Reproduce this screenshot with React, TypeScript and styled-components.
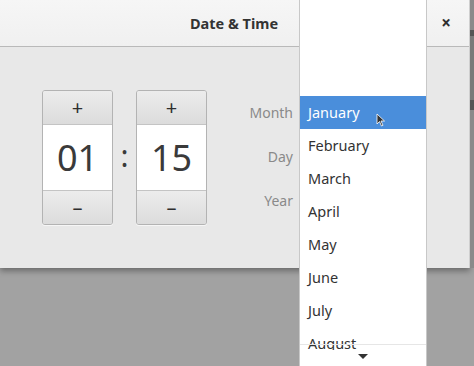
import React from 'react';
import styled, { createGlobalStyle } from 'styled-components';

const months = ['January', 'February', 'March', 'April', 'May', 'June', 'July', 'August'];

const Global = createGlobalStyle`
  html, body {
    margin: 0;
    padding: 0;
    background: #a2a2a2;
    font-family: "Noto Sans", "Open Sans", sans-serif;
  }
`;

const Stage = styled.div`
  position: relative;
  width: 474px;
  height: 366px;
  overflow: hidden;
  background: #a2a2a2;
  display: flex;
  flex-direction: column;
`;

const Top = styled.div`
  display: flex;
`;

const Window = styled.div`
  width: 470px;
  height: 268px;
  display: flex;
  flex-direction: column;
  background: #e8e8e8;
  box-shadow: 0 3px 6px rgba(0, 0, 0, 0.35);
  border-right: 1px solid #cfcfcf;
  box-sizing: border-box;
`;

const Edge = styled.div`
  width: 4px;
  height: 268px;
  background: linear-gradient(to bottom, #8a8a8a 0 30px, #555 30px 36px, #7a7a7a 36px 100px, #555 100px 110px, #8a8a8a 110px);
`;

const Header = styled.div`
  height: 46px;
  flex-shrink: 0;
  display: flex;
  align-items: center;
  justify-content: center;
  position: relative;
  background: linear-gradient(to bottom, #f6f6f6, #f0f0f0);
  border-bottom: 1px solid #b9b9b9;
`;

const Title = styled.div`
  font-weight: 700;
  font-size: 14.5px;
  color: #333;
  margin-left: -1px;
`;

const Close = styled.div`
  position: absolute;
  right: 18px;
  top: 11px;
  font-size: 17px;
  font-weight: 700;
  color: #2e2e2e;
`;

const Body = styled.div`
  display: flex;
  padding: 43px 0 0 42px;
`;

const Spinner = styled.div`
  width: 71px;
  display: flex;
  flex-direction: column;
  border: 1px solid #b3b3b3;
  border-radius: 3px;
  overflow: hidden;
  box-sizing: border-box;
  box-shadow: 0 1px 0 rgba(255, 255, 255, 0.6);
`;

const SpinButton = styled.div<{ top?: boolean }>`
  height: 33px;
  display: flex;
  align-items: center;
  justify-content: center;
  font-size: 20px;
  color: #2e2e2e;
  background: linear-gradient(to bottom, #ececec, #dcdcdc);
  border-${(p) => (p.top ? 'bottom' : 'top')}: 1px solid #c4c4c4;
`;

const Value = styled.div`
  height: 65px;
  background: #fff;
  display: flex;
  align-items: center;
  justify-content: center;
  font-size: 36px;
  color: #3a3a3a;
  font-weight: 400;
`;

const Colon = styled.div`
  width: 23px;
  display: flex;
  align-items: center;
  justify-content: center;
  font-size: 30px;
  color: #3a3a3a;
  padding-bottom: 4px;
`;

const Labels = styled.div`
  display: flex;
  flex-direction: column;
  align-items: flex-end;
  width: 86px;
  padding-top: 13px;
  gap: 25px;
`;

const Label = styled.div`
  font-size: 14px;
  line-height: 19px;
  color: #8a8a8a;
`;

const Popup = styled.div`
  position: absolute;
  left: 299px;
  top: 0;
  width: 128px;
  height: 366px;
  background: #fff;
  border-left: 1px solid #c8c8c8;
  border-right: 1px solid #c8c8c8;
  box-sizing: border-box;
  display: flex;
  flex-direction: column;
  overflow: hidden;
`;

const Items = styled.div`
  padding-top: 96px;
  flex: 1;
  overflow: hidden;
`;

const Item = styled.div<{ selected?: boolean }>`
  height: 33px;
  display: flex;
  align-items: center;
  padding: 0 0 2px 8px;
  box-sizing: border-box;
  font-size: 14.5px;
  color: ${(p) => (p.selected ? '#fff' : '#333')};
  background: ${(p) => (p.selected ? '#4a8edb' : 'transparent')};
  position: relative;
`;

const Scroll = styled.div`
  position: absolute;
  left: 0;
  right: 0;
  bottom: 0;
  height: 22px;
  background: linear-gradient(to bottom, transparent 0 5px, #fff 5px);
  border-top: 1px solid #e6e6e6;
  display: flex;
  justify-content: center;
  padding-top: 9px;
  box-sizing: border-box;
`;

const Cursor = styled.svg`
  position: absolute;
  left: 76px;
  top: 17px;
`;

const App: React.FC = () => (
  <Stage>
    <Global />
    <Top>
      <Window>
        <Header>
          <Title>Date &amp; Time</Title>
          <Close>×</Close>
        </Header>
        <Body>
          <Spinner>
            <SpinButton top>+</SpinButton>
            <Value>01</Value>
            <SpinButton>–</SpinButton>
          </Spinner>
          <Colon>:</Colon>
          <Spinner>
            <SpinButton top>+</SpinButton>
            <Value>15</Value>
            <SpinButton>–</SpinButton>
          </Spinner>
          <Labels>
            <Label>Month</Label>
            <Label>Day</Label>
            <Label>Year</Label>
          </Labels>
        </Body>
      </Window>
      <Edge />
    </Top>
    <Popup>
      <Items>
        {months.map((m, i) => (
          <Item key={m} selected={i === 0}>
            {m}
            {i === 0 && (
              <Cursor width="10" height="14" viewBox="0 0 10 14">
                <path d="M1 1 L1 11 L3.5 8.5 L5.5 13 L7 12.3 L5 8 L8.5 8 Z" fill="#333" stroke="#fff" strokeWidth="0.8" />
              </Cursor>
            )}
          </Item>
        ))}
      </Items>
      <Scroll>
        <svg width="10" height="6" viewBox="0 0 10 6">
          <path d="M0 0 L10 0 L5 5 Z" fill="#333" />
        </svg>
      </Scroll>
    </Popup>
  </Stage>
);

export default App;
